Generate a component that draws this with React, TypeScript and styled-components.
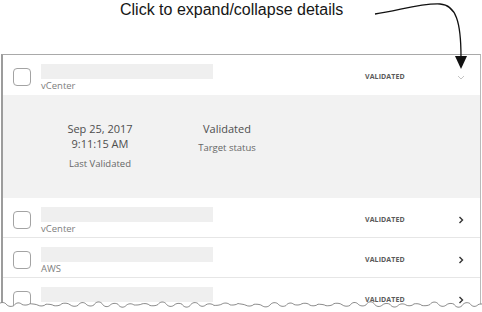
import React from 'react';
import styled, { createGlobalStyle } from 'styled-components';

// Data
interface Target {
  id: string;
  type: string;
  status: string;
  expanded?: boolean;
}

const TARGETS: Target[] = [
  { id: 't1', type: 'vCenter', status: 'VALIDATED', expanded: true },
  { id: 't2', type: 'vCenter', status: 'VALIDATED' },
  { id: 't3', type: 'AWS', status: 'VALIDATED' },
  { id: 't4', type: '', status: 'VALIDATED' },
];

// Torn edge, fixed offsets so every render looks the same
const WAVE_BASE = [0.5, -0.6, 1, 0, -0.8, 0.7, -0.3, 1.2, -0.9, 0.2, 0.9, -0.5, 0.4, -1, 0.8, -0.2, 1.1];
const WAVE_AMP = [2, 1.4, 2.3, 1.7, 1.2, 2.2, 1.5, 2.4, 1.8, 1.3, 2.1, 1.6, 2.3];
const buildWave = () => {
  let d = `M-2 ${304.5 + WAVE_BASE[0]}`;
  let i = 0;
  for (let x = 6; x <= 490; x += 8, i++) {
    const y = 304.5 + WAVE_BASE[(i + 1) % WAVE_BASE.length];
    const amp = WAVE_AMP[i % WAVE_AMP.length] * (i % 2 ? 1 : -1);
    d += ` C${x - 6} ${y + amp} ${x - 2} ${y + amp} ${x} ${y}`;
  }
  return d;
};
const WAVE = buildWave();

// Styles
const GlobalStyle = createGlobalStyle`
  html, body {
    margin: 0;
    padding: 0;
    background: #ffffff;
    overflow: hidden;
  }
`;

const Page = styled.div`
  position: relative;
  width: 482px;
  height: 312px;
  overflow: hidden;
  font-family: 'Open Sans', 'Noto Sans', sans-serif;
`;

const Caption = styled.div`
  padding-left: 120px;
  font-family: 'Liberation Sans', Arial, sans-serif;
  font-size: 16px;
  line-height: 19px;
  color: #161616;
`;

const Panel = styled.div`
  margin: 35px 0 0 1px;
  width: 477px;
  height: 256px;
  border-top: 1px solid #a9a9a9;
  border-left: 2px solid #9c9c9c;
  border-right: 1px solid #b9b9b9;
  overflow: hidden;
`;

const Row = styled.div<{ divided?: boolean }>`
  display: flex;
  align-items: flex-start;
  height: 40px;
  box-sizing: border-box;
  padding-left: 10px;
  background: #ffffff;
  border-bottom: ${p => (p.divided ? '1px solid #e6e6e6' : 'none')};
`;

const Checkbox = styled.div`
  flex: none;
  width: 18px;
  height: 18px;
  box-sizing: border-box;
  margin-top: 13px;
  border: 1.5px solid #a3a3a3;
  border-radius: 4px;
  background: #fff;
`;

const NameBlock = styled.div`
  margin-left: 10px;
  padding-top: 9px;
`;

const NameBar = styled.div`
  width: 172px;
  height: 15px;
  background: #efefef;
`;

const TypeLabel = styled.div`
  margin-top: 1px;
  font-size: 9.5px;
  line-height: 12px;
  color: #808080;
`;

const Status = styled.div`
  margin-left: auto;
  width: 86px;
  margin-top: 17px;
  font-size: 7px;
  line-height: 10px;
  font-weight: 700;
  letter-spacing: 0.1px;
  color: #5a5a5a;
`;

const ToggleBox = styled.div`
  flex: none;
  width: 20px;
  height: 10px;
  margin: 17px 9px 0 0;
  display: flex;
  align-items: center;
  justify-content: center;
`;

const Details = styled.div`
  display: flex;
  height: 103px;
  box-sizing: border-box;
  padding: 26px 0 0 40px;
  background: #f2f2f2;
  gap: 20px;
`;

const DetailCol = styled.div<{ w: number }>`
  width: ${p => p.w}px;
  text-align: center;
`;

const DetailValue = styled.div`
  font-size: 11px;
  line-height: 15px;
  color: #4e4e4e;
`;

const DetailLabel = styled.div<{ gap: number }>`
  margin-top: ${p => p.gap}px;
  font-size: 9.5px;
  line-height: 12px;
  color: #666;
`;

const Overlay = styled.svg`
  position: absolute;
  left: 0;
  top: 0;
  pointer-events: none;
`;

// Icons
const ChevronDown = () => (
  <svg width="8" height="5" viewBox="0 0 8 5">
    <polyline points="1,1 4,4 7,1" fill="none" stroke="#c4c4c4" strokeWidth="1" />
  </svg>
);

const ChevronRight = () => (
  <svg width="6" height="8" viewBox="0 0 6 8">
    <polyline points="1.5,1 4.5,4 1.5,7" fill="none" stroke="#333" strokeWidth="1.4" />
  </svg>
);

const TargetRow: React.FC<{ target: Target; divided: boolean }> = ({ target, divided }) => (
  <Row divided={divided}>
    <Checkbox />
    <NameBlock>
      <NameBar />
      {target.type && <TypeLabel>{target.type}</TypeLabel>}
    </NameBlock>
    <Status>{target.status}</Status>
    <ToggleBox>{target.expanded ? <ChevronDown /> : <ChevronRight />}</ToggleBox>
  </Row>
);

const App: React.FC = () => {
  return (
    <Page>
      <GlobalStyle />
      <Caption>Click to expand/collapse details</Caption>
      <Panel>
        {TARGETS.map(t => (
          <React.Fragment key={t.id}>
            <TargetRow target={t} divided={!t.expanded} />
            {t.expanded && (
              <Details>
                <DetailCol w={114}>
                  <DetailValue>Sep 25, 2017</DetailValue>
                  <DetailValue>9:11:15 AM</DetailValue>
                  <DetailLabel gap={7}>Last Validated</DetailLabel>
                </DetailCol>
                <DetailCol w={100}>
                  <DetailValue>Validated</DetailValue>
                  <DetailLabel gap={6}>Target status</DetailLabel>
                </DetailCol>
              </Details>
            )}
          </React.Fragment>
        ))}
      </Panel>

      {/* annotation arrow */}
      <Overlay width="482" height="312" viewBox="0 0 482 312">
        <path
          d="M375 14 C 398 11, 420 3, 440 4 C 456 5, 461 22, 461 57"
          fill="none"
          stroke="#111"
          strokeWidth="1.3"
        />
        <polygon points="455,56 467,56 461,69" fill="#111" />
        {/* torn bottom edge */}
        <path d={`${WAVE} L492 312 L-2 312 Z`} fill="#ffffff" />
        <path d={WAVE} fill="none" stroke="#8c8c8c" strokeWidth="1" />
      </Overlay>
    </Page>
  );
};

export default App;
